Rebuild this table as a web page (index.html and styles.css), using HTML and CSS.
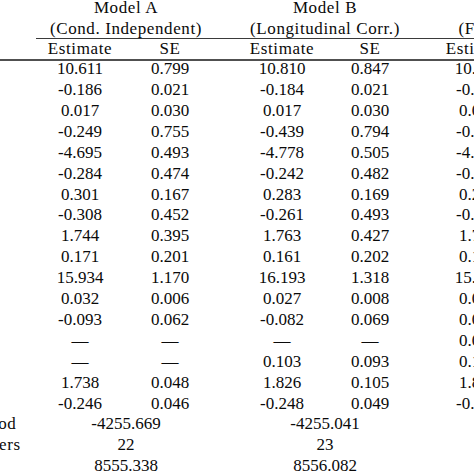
FILE: index.html
```html
<!DOCTYPE html>
<html>
<head>
<meta charset="utf-8">
<link rel="stylesheet" href="styles.css">
</head>
<body>
<div class="table">
  <div class="row r-model">
    <div class="cell"></div>
    <div class="cell txt span2">Model A</div>
    <div class="cell"></div>
    <div class="cell txt span2">Model B</div>
    <div class="cell"></div>
    <div class="cell txt span2">Model C</div>
  </div>
  <div class="row r-sub">
    <div class="cell"></div>
    <div class="cell txt span2 ruled">(Cond. Independent)</div>
    <div class="cell ruled"></div>
    <div class="cell txt span2 ruled">(Longitudinal Corr.)</div>
    <div class="cell ruled"></div>
    <div class="cell txt span2 ruled">(Full Correlation)</div>
  </div>
  <div class="row r-head">
    <div class="cell"></div>
    <div class="cell txt">Estimate</div>
    <div class="cell txt">SE</div>
    <div class="cell"></div>
    <div class="cell txt">Estimate</div>
    <div class="cell txt">SE</div>
    <div class="cell"></div>
    <div class="cell txt">Estimate</div>
    <div class="cell txt">SE</div>
  </div>

  <div class="row r-data"><div class="cell"></div><div class="cell">10.611</div><div class="cell">0.799</div><div class="cell"></div><div class="cell">10.810</div><div class="cell">0.847</div><div class="cell"></div><div class="cell">10.805</div><div class="cell"></div></div>
  <div class="row r-data"><div class="cell"></div><div class="cell">-0.186</div><div class="cell">0.021</div><div class="cell"></div><div class="cell">-0.184</div><div class="cell">0.021</div><div class="cell"></div><div class="cell">-0.184</div><div class="cell"></div></div>
  <div class="row r-data"><div class="cell"></div><div class="cell">0.017</div><div class="cell">0.030</div><div class="cell"></div><div class="cell">0.017</div><div class="cell">0.030</div><div class="cell"></div><div class="cell">0.017</div><div class="cell"></div></div>
  <div class="row r-data"><div class="cell"></div><div class="cell">-0.249</div><div class="cell">0.755</div><div class="cell"></div><div class="cell">-0.439</div><div class="cell">0.794</div><div class="cell"></div><div class="cell">-0.436</div><div class="cell"></div></div>
  <div class="row r-data"><div class="cell"></div><div class="cell">-4.695</div><div class="cell">0.493</div><div class="cell"></div><div class="cell">-4.778</div><div class="cell">0.505</div><div class="cell"></div><div class="cell">-4.776</div><div class="cell"></div></div>
  <div class="row r-data"><div class="cell"></div><div class="cell">-0.284</div><div class="cell">0.474</div><div class="cell"></div><div class="cell">-0.242</div><div class="cell">0.482</div><div class="cell"></div><div class="cell">-0.243</div><div class="cell"></div></div>
  <div class="row r-data"><div class="cell"></div><div class="cell">0.301</div><div class="cell">0.167</div><div class="cell"></div><div class="cell">0.283</div><div class="cell">0.169</div><div class="cell"></div><div class="cell">0.283</div><div class="cell"></div></div>
  <div class="row r-data"><div class="cell"></div><div class="cell">-0.308</div><div class="cell">0.452</div><div class="cell"></div><div class="cell">-0.261</div><div class="cell">0.493</div><div class="cell"></div><div class="cell">-0.262</div><div class="cell"></div></div>
  <div class="row r-data"><div class="cell"></div><div class="cell">1.744</div><div class="cell">0.395</div><div class="cell"></div><div class="cell">1.763</div><div class="cell">0.427</div><div class="cell"></div><div class="cell">1.763</div><div class="cell"></div></div>
  <div class="row r-data"><div class="cell"></div><div class="cell">0.171</div><div class="cell">0.201</div><div class="cell"></div><div class="cell">0.161</div><div class="cell">0.202</div><div class="cell"></div><div class="cell">0.161</div><div class="cell"></div></div>
  <div class="row r-data"><div class="cell"></div><div class="cell">15.934</div><div class="cell">1.170</div><div class="cell"></div><div class="cell">16.193</div><div class="cell">1.318</div><div class="cell"></div><div class="cell">15.193</div><div class="cell"></div></div>
  <div class="row r-data"><div class="cell"></div><div class="cell">0.032</div><div class="cell">0.006</div><div class="cell"></div><div class="cell">0.027</div><div class="cell">0.008</div><div class="cell"></div><div class="cell">0.027</div><div class="cell"></div></div>
  <div class="row r-data"><div class="cell"></div><div class="cell">-0.093</div><div class="cell">0.062</div><div class="cell"></div><div class="cell">-0.082</div><div class="cell">0.069</div><div class="cell"></div><div class="cell">0.082</div><div class="cell"></div></div>
  <div class="row r-data"><div class="cell"></div><div class="cell">—</div><div class="cell">—</div><div class="cell"></div><div class="cell">—</div><div class="cell">—</div><div class="cell"></div><div class="cell">0.020</div><div class="cell"></div></div>
  <div class="row r-data"><div class="cell"></div><div class="cell">—</div><div class="cell">—</div><div class="cell"></div><div class="cell">0.103</div><div class="cell">0.093</div><div class="cell"></div><div class="cell">0.103</div><div class="cell"></div></div>
  <div class="row r-data"><div class="cell"></div><div class="cell">1.738</div><div class="cell">0.048</div><div class="cell"></div><div class="cell">1.826</div><div class="cell">0.105</div><div class="cell"></div><div class="cell">1.826</div><div class="cell"></div></div>
  <div class="row r-data"><div class="cell"></div><div class="cell">-0.246</div><div class="cell">0.046</div><div class="cell"></div><div class="cell">-0.248</div><div class="cell">0.049</div><div class="cell"></div><div class="cell">-0.248</div><div class="cell"></div></div>
  <div class="row r-data"><div class="cell label">Log-likelihood</div><div class="cell span2">-4255.669</div><div class="cell"></div><div class="cell span2">-4255.041</div><div class="cell"></div><div class="cell span2"></div></div>
  <div class="row r-data"><div class="cell label"># of parameters</div><div class="cell span2">22</div><div class="cell"></div><div class="cell span2">23</div><div class="cell"></div><div class="cell span2"></div></div>
  <div class="row r-data"><div class="cell label">AIC</div><div class="cell span2">8555.338</div><div class="cell"></div><div class="cell span2">8556.082</div><div class="cell"></div><div class="cell span2"></div></div>
</div>
</body>
</html>
```

FILE: styles.css
```css
html, body {
  margin: 0;
  padding: 0;
  background: #ffffff;
}

body {
  width: 474px;
  height: 474px;
  overflow: hidden;
  font-family: "Liberation Serif", "Times New Roman", serif;
  font-size: 17px;
  color: #0a0a0a;
}

.table {
  width: 708px;
  margin-left: -94px;
}

.row {
  display: grid;
  grid-template-columns: 130px 88px 92px 21px 90px 86px 21px 88px 92px;
}

.cell {
  text-align: center;
  white-space: nowrap;
}

.txt {
  letter-spacing: 0.6px;
}

.label {
  text-align: left;
  letter-spacing: 0.6px;
  overflow: hidden;
}

.span2 {
  grid-column: span 2;
}

.r-model {
  line-height: 16px;
}

.r-sub {
  padding-top: 4.26px;
  line-height: 18px;
}

.ruled {
  border-bottom: 1px solid #3a3a3a;
}

.r-head {
  line-height: 20px;
  border-bottom: 2px solid #505050;
}

.r-data {
  height: 20.9px;
  line-height: 16px;
}
```
